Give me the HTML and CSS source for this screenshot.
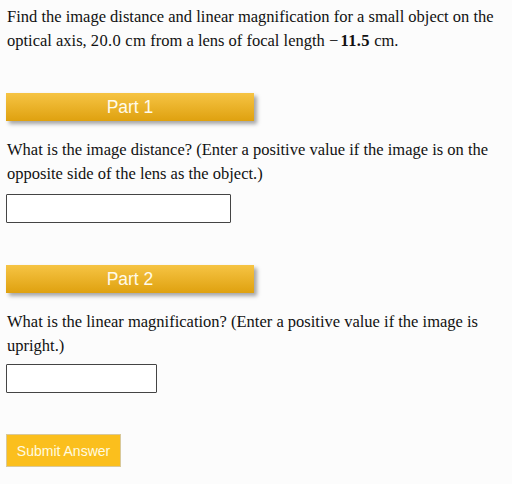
FILE: index.html
```html
<!DOCTYPE html>
<html>
    <head>
        <title>Lens Problem</title>
        <meta charset="UTF-8">
        <link rel="stylesheet" href="styles.css">
    </head>
    <body>
        <p class="problem">Find the image distance and linear magnification for a small object on the optical axis, <span class="num">20.0&nbsp;cm</span> from a lens of focal length <span class="num neg"><span class="minus">&minus;</span>11.5&nbsp;</span>cm.</p>

        <div class="part">Part 1</div>
        <p class="question">What is the image distance? (Enter a positive value if the image is on the opposite side of the lens as the object.)</p>
        <input class="answer wide" type="text">

        <div class="part part-two">Part 2</div>
        <p class="question">What is the linear magnification? (Enter a positive value if the image is upright.)</p>
        <input class="answer narrow" type="text">

        <div class="submit-row">
            <button class="submit">Submit Answer</button>
        </div>
    </body>
</html>
```
FILE: styles.css
```css
body{
    margin: 0;
    padding: 5px 6px 0 7px;
    background: #fcfcfc;
    font-family: "Liberation Serif", serif;
    font-size: 16.5px;
    line-height: 24px;
    color: #111;
}

p{
    margin: 0;
}

.problem{
    width: 498px;
}

.num{
    font-weight: 500;
    letter-spacing: 0.3px;
}

.neg{
    font-weight: bold;
}

.minus{
    font-weight: normal;
    margin-right: 2px;
}

.part{
    width: 248px;
    height: 28px;
    margin: 40px 0 0 -1px;
    background: linear-gradient(#f6c444, #dfa10f);
    box-shadow: 3px 3px 4px rgba(0, 0, 0, 0.35);
    color: #fffbea;
    font-family: "Liberation Sans", sans-serif;
    font-size: 17.5px;
    line-height: 28px;
    text-align: center;
}

.part-two{
    margin-top: 42px;
}

.question{
    margin-top: 17px;
    width: 498px;
}

.answer{
    display: block;
    box-sizing: border-box;
    height: 29px;
    margin: 8px 0 0 -1px;
    border: 1px solid #444;
    border-radius: 1px;
    background: #fff;
    padding: 0 4px;
}

.wide{
    width: 225px;
}

.narrow{
    width: 151px;
    margin-top: 6px;
}

.submit-row{
    margin-top: 41px;
}

.submit{
    width: 115px;
    height: 33px;
    margin-left: -1px;
    border: 1px solid #d9c99a;
    background: #fbbf1d;
    color: #fffbe0;
    font-family: "Liberation Sans", sans-serif;
    font-size: 14px;
    padding: 0;
}
```
